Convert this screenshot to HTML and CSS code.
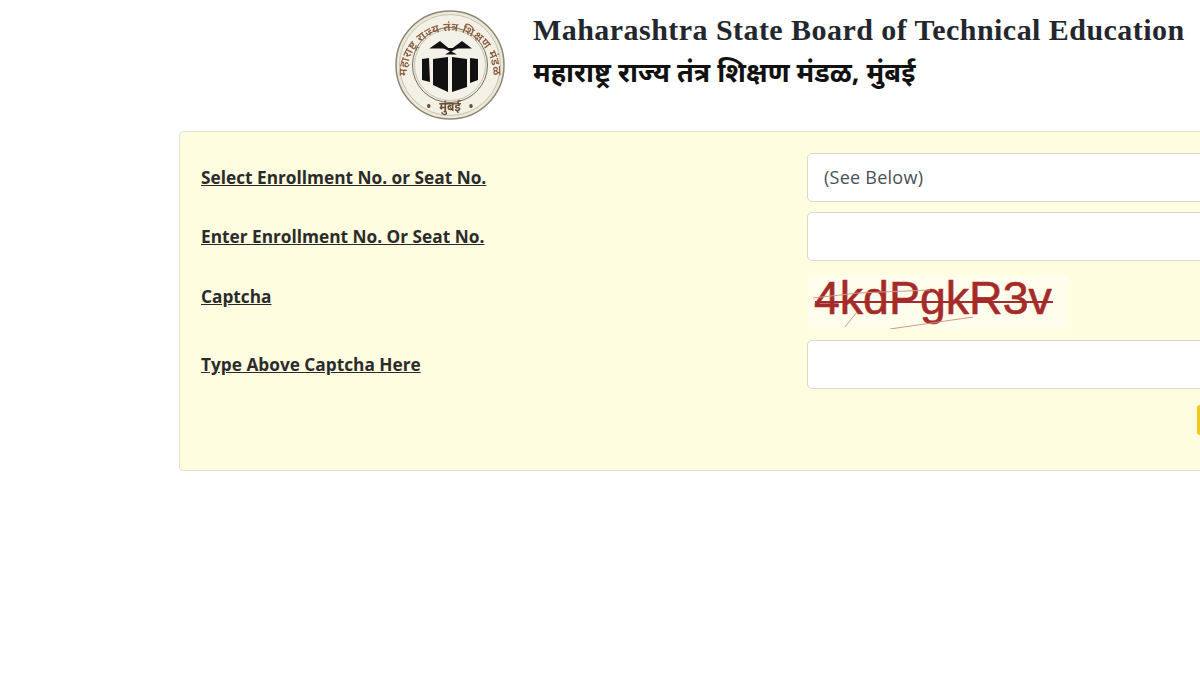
FILE: index.html
```html
<!DOCTYPE html>
<html lang="en">
<head>
<meta charset="utf-8">
<title>MSBTE Result</title>
<link rel="stylesheet" href="styles.css">
</head>
<body>
<div class="page">
  <header class="head">
    <svg class="logo" viewBox="0 0 110 110" width="110" height="110" aria-label="MSBTE logo">
      <defs>
        <path id="ring" d="M22.5 92 A43 43 0 1 1 87.5 92"/>
      </defs>
      <circle cx="55" cy="55" r="54" fill="#ece8da" stroke="#8d8672" stroke-width="1.5"/>
      <circle cx="55" cy="55" r="50.5" fill="#f3f0e5" stroke="#b5b09c" stroke-width=".7"/>
      <circle cx="55" cy="55" r="37.5" fill="#f4f2e8" stroke="#6f6a58" stroke-width="1"/>
      <circle cx="55" cy="55" r="35.5" fill="none" stroke="#a5a08c" stroke-width=".6"/>
      <text class="ring-text"><textPath href="#ring" startOffset="50%" text-anchor="middle">महाराष्ट्र राज्य तंत्र शिक्षण मंडळ</textPath></text>
      <text class="ring-city" x="55" y="101" text-anchor="middle">• मुंबई •</text>
      <path fill="#111" d="M27 49l7-1 1 24-8-2zM38 49l15-2v35l-15-7zM57 47l15 2v28l-15 5zM75 48l8 1v21l-8 3z"/>
      <path fill="#111" d="M34.3 38.5L45 31l9 7.5zM57 38.5L67 31l10 7.5z"/>
      <path fill="#111" d="M48 38h15l-6.5 3.5 5.5 3H50l5-3z"/>
    </svg>
    <div class="titles">
      <h1 class="title-en">Maharashtra State Board of Technical Education</h1>
      <p class="title-mr">महाराष्ट्र राज्य तंत्र शिक्षण मंडळ, मुंबई</p>
    </div>
  </header>

  <form class="panel">
    <div class="row row-select">
      <label class="label">Select Enrollment No. or Seat No.</label>
      <div class="field">(See Below)</div>
    </div>
    <div class="row row-enter">
      <label class="label">Enter Enrollment No. Or Seat No.</label>
      <div class="field"></div>
    </div>
    <div class="row row-captcha">
      <label class="label">Captcha</label>
      <div class="captcha">
        <span class="captcha-text">4kdPgkR3v</span>
        <svg class="captcha-noise" viewBox="0 0 260 54" width="260" height="54" aria-hidden="true">
          <path d="M7 27H245" stroke="#a52a2a" stroke-width="2" fill="none"/>
          <path d="M5 23L50 18 122 15M37 52L49 37M82 54L165 42" stroke="#cf9a80" stroke-width="1" fill="none"/>
        </svg>
      </div>
    </div>
    <div class="row row-type">
      <label class="label">Type Above Captcha Here</label>
      <div class="field"></div>
    </div>
    <div class="actions"><span class="submit"></span></div>
  </form>
</div>
</body>
</html>
```
FILE: styles.css
```css
html, body {
  margin: 0;
  padding: 0;
  height: 100%;
  background: #fff;
  overflow: hidden;
}
.page {
  width: 1200px;
  height: 675px;
  overflow: hidden;
  font-family: "Open Sans", "Noto Sans", sans-serif;
}
.head {
  display: flex;
  align-items: flex-start;
  gap: 28px;
  height: 131px;
  padding: 10px 0 0 395px;
  box-sizing: border-box;
}
.logo {
  flex: none;
  filter: blur(.4px);
}
.ring-text { font: 600 11.5px "Noto Sans", "Noto Sans Devanagari", sans-serif; fill: #8a5a3e; letter-spacing: .4px; }
.ring-city { font: 700 12px "Noto Sans", "Noto Sans Devanagari", sans-serif; fill: #6b5038; word-spacing: 5px; }
.titles { white-space: nowrap; }
.title-en {
  margin: 3px 0 0;
  font: 700 30px/34px "Liberation Serif", serif;
  color: #23262d;
  letter-spacing: .45px;
}
.title-mr {
  margin: 7px 0 0;
  font: 700 27.2px/36px "Noto Sans", "Noto Sans Devanagari", "Liberation Sans", sans-serif;
  color: #111;
}
.panel {
  display: block;
  margin-left: 179px;
  width: 1100px;
  height: 340px;
  box-sizing: border-box;
  padding: 21px 0 0 21px;
  background: #fffde0;
  border: 1px solid #e4e3d0;
  border-radius: 4px;
}
.row {
  display: flex;
  align-items: flex-start;
}
.row-enter { margin-top: 10px; }
.row-captcha { margin-top: 14px; height: 54px; }
.row-type { margin-top: 11px; }
.label {
  flex: none;
  width: 606px;
  padding-top: 13px;
  font-size: 17.25px;
  line-height: 24px;
  font-weight: 700;
  color: #2b2b2b;
  text-decoration: underline;
  white-space: nowrap;
}
.row-captcha .label { padding-top: 10px; }
.field {
  flex: none;
  width: 500px;
  height: 49px;
  box-sizing: border-box;
  padding: 0 16px;
  background: #fff;
  border: 1px solid #d9d9cc;
  border-radius: 5px;
  font-size: 18px;
  letter-spacing: .25px;
  line-height: 46px;
  color: #495057;
}
.captcha {
  position: relative;
  flex: none;
  width: 260px;
  height: 54px;
  margin-left: 1px;
  background: #fffeec;
}
.captcha-text {
  display: block;
  padding-left: 6px;
  font: 400 46.5px/47px "Liberation Sans", sans-serif;
  color: #a52a2a;
  -webkit-text-stroke: .6px #a52a2a;
}
.captcha-noise {
  position: absolute;
  left: 0;
  top: 0;
}
.actions {
  display: flex;
  margin-top: 16px;
  padding-left: 996px;
}
.submit {
  display: block;
  width: 30px;
  height: 30px;
  background: #f4c91f;
  border-radius: 3px;
}
```
